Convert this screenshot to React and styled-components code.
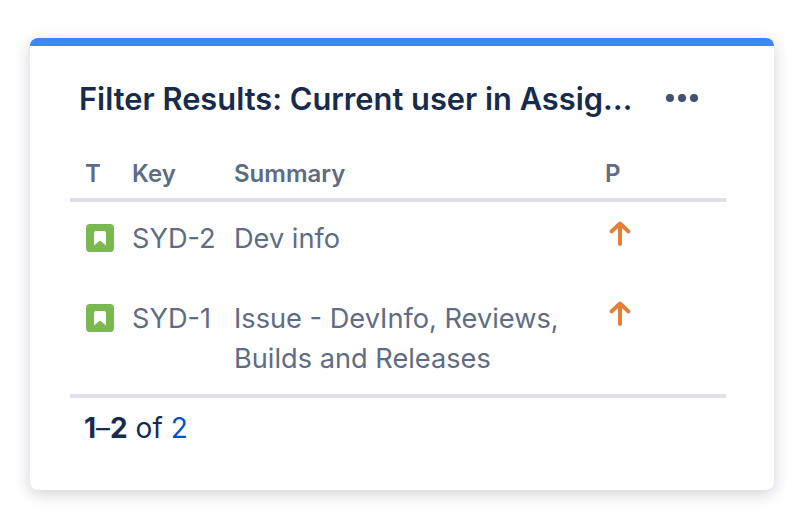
import React from 'react';
import styled, { createGlobalStyle } from 'styled-components';

const GlobalStyle = createGlobalStyle`
  html, body {
    margin: 0;
    background: #fff;
    font-family: Inter, "Liberation Sans", sans-serif;
    font-optical-sizing: none;
  }
`;

const Page = styled.div`
  width: 812px;
  height: 518px;
  box-sizing: border-box;
  padding: 38px 38px 28px 30px;
`;

const Card = styled.section`
  height: 452px;
  box-sizing: border-box;
  background: #fff;
  border-top: 8px solid #4084f5;
  border-radius: 8px;
  box-shadow: 0 4px 16px rgba(9, 30, 66, 0.2);
  padding: 0 48px 0 40px;
`;

const Header = styled.header`
  display: flex;
  align-items: center;
  height: 106px;
  padding-left: 9px;
`;

const Title = styled.h2`
  width: 556px;
  margin: 0;
  color: #172b4d;
  font-size: 30.8px;
  font-weight: 600;
  line-height: 36px;
  white-space: nowrap;
  overflow: hidden;
  text-overflow: ellipsis;
`;

const Dots = styled.svg`
  display: block;
  margin-left: 31px;
  margin-bottom: 2px;
`;

const Table = styled.table`
  width: 656px;
  border-collapse: collapse;
  table-layout: fixed;
`;

const HeadCell = styled.th`
  width: ${props => props.$width}px;
  height: 48px;
  box-sizing: border-box;
  padding: 0 0 4px ${props => props.$pad || 0}px;
  border-bottom: 4px solid #dfe1e6;
  color: #5e6c84;
  font-size: 24px;
  font-weight: 600;
  text-align: left;
  vertical-align: middle;
`;

const Cell = styled.td`
  padding: 17px 0 ${props => props.$last ? 15 : 23}px ${props => props.$pad || 0}px;
  color: #5e6c84;
  font-size: 27.2px;
  line-height: 40px;
  vertical-align: top;
  white-space: ${props => props.$wrap ? 'normal' : 'nowrap'};
`;

const LastRow = styled.tr`
  border-bottom: 4px solid #dfe1e6;
`;

const IconBox = styled.svg`
  display: block;
  margin-top: ${props => props.$top}px;
`;

const Footer = styled.p`
  margin: 0;
  padding: 10px 0 0 14px;
  color: #172b4d;
  font-size: 28px;
  line-height: 40px;
`;

const Range = styled.strong`
  font-weight: 700;
`;

const Total = styled.a`
  color: #0052cc;
  text-decoration: none;
`;

const StoryIcon = () => (
  <IconBox $top={5} width="28" height="28" viewBox="0 0 28 28">
    <rect width="28" height="28" rx="4" fill="#7ab94f" />
    <path d="M8 9a2 2 0 0 1 2-2h8a2 2 0 0 1 2 2v12.6l-6-5-6 5z" fill="#fff" />
  </IconBox>
);

const PriorityIcon = () => (
  <IconBox $top={1} width="24" height="28" viewBox="0 0 24 28">
    <path
      d="M12 24V3.5M3.5 11.5 12 3.5l8.5 8"
      fill="none"
      stroke="#e37f36"
      strokeWidth="4"
      strokeLinecap="round"
      strokeLinejoin="round"
    />
  </IconBox>
);

const issues = [
  { key: 'SYD-2', summary: 'Dev info' },
  { key: 'SYD-1', summary: 'Issue - DevInfo, Reviews, Builds and Releases' },
];

export default function App() {
  return (
    <Page>
      <GlobalStyle />
      <Card>
        <Header>
          <Title>Filter Results: Current user in Assignee field</Title>
          <Dots width="32" height="8" viewBox="0 0 32 8">
            <circle cx="4" cy="4" r="4" fill="#42526e" />
            <circle cx="16" cy="4" r="4" fill="#42526e" />
            <circle cx="28" cy="4" r="4" fill="#42526e" />
          </Dots>
        </Header>
        <Table>
          <thead>
            <tr>
              <HeadCell $width={62} $pad={15}>T</HeadCell>
              <HeadCell $width={102}>Key</HeadCell>
              <HeadCell $width={371}>Summary</HeadCell>
              <HeadCell $width={121}>P</HeadCell>
            </tr>
          </thead>
          <tbody>
            {issues.map((issue, i) => {
              const Row = i === issues.length - 1 ? LastRow : 'tr';
              return (
                <Row key={issue.key}>
                  <Cell $pad={16}><StoryIcon /></Cell>
                  <Cell>{issue.key}</Cell>
                  <Cell $wrap $last={i === 1}>{issue.summary}</Cell>
                  <Cell $pad={3}><PriorityIcon /></Cell>
                </Row>
              );
            })}
          </tbody>
        </Table>
        <Footer>
          <Range>1</Range>–<Range>2</Range> of <Total href="#">2</Total>
        </Footer>
      </Card>
    </Page>
  );
}
